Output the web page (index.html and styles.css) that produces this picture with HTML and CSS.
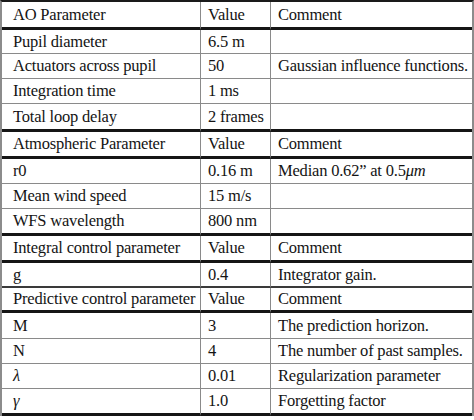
FILE: index.html
```html
<!DOCTYPE html>
<html>
<head>
<meta charset="utf-8">
<link rel="stylesheet" href="styles.css">
</head>
<body>
<table class="params">
  <colgroup>
    <col class="c-name">
    <col class="c-value">
    <col class="c-comment">
  </colgroup>
  <tbody>
    <tr class="head r25"><td>AO Parameter</td><td>Value</td><td>Comment</td></tr>
    <tr class="r23"><td>Pupil diameter</td><td>6.5 m</td><td></td></tr>
    <tr><td>Actuators across pupil</td><td>50</td><td>Gaussian influence functions.</td></tr>
    <tr><td>Integration time</td><td>1 ms</td><td></td></tr>
    <tr class="end r25"><td>Total loop delay</td><td>2 frames</td><td></td></tr>
    <tr class="head"><td>Atmospheric Parameter</td><td>Value</td><td>Comment</td></tr>
    <tr><td>r0</td><td>0.16 m</td><td>Median 0.62” at 0.5<span class="math">μm</span></td></tr>
    <tr><td>Mean wind speed</td><td>15 m/s</td><td></td></tr>
    <tr class="end"><td>WFS wavelength</td><td>800 nm</td><td></td></tr>
    <tr class="head"><td>Integral control parameter</td><td>Value</td><td>Comment</td></tr>
    <tr class="end mid r23"><td>g</td><td>0.4</td><td>Integrator gain.</td></tr>
    <tr class="head r22"><td>Predictive control parameter</td><td>Value</td><td>Comment</td></tr>
    <tr class="r25"><td>M</td><td>3</td><td>The prediction horizon.</td></tr>
    <tr><td>N</td><td>4</td><td>The number of past samples.</td></tr>
    <tr><td><span class="math">λ</span></td><td>0.01</td><td>Regularization parameter</td></tr>
    <tr class="last"><td><span class="math">γ</span></td><td>1.0</td><td>Forgetting factor</td></tr>
  </tbody>
</table>
</body>
</html>
```

FILE: styles.css
```css
html, body {
  margin: 0;
  padding: 0;
  background: #ffffff;
}

.params {
  width: 474px;
  table-layout: fixed;
  border-collapse: separate;
  border-spacing: 0;
  border-top: 2px solid #1a1a1a;
  border-left: 2px solid #8c8c8c;
  border-right: 2px solid #8c8c8c;
  font-family: "Liberation Serif", "Times New Roman", serif;
  font-size: 16.5px;
  letter-spacing: -0.2px;
  color: #141414;
}

.c-name { width: 199px; }
.c-value { width: 70px; }
.c-comment { width: 201px; }

.params td {
  box-sizing: content-box;
  height: 24px;
  padding: 0 0 0 8px;
  line-height: 24px;
  vertical-align: middle;
  white-space: nowrap;
  overflow: hidden;
  border-bottom: 1px solid #8a8a8a;
}

.params td:first-child {
  padding-left: 11px;
  border-right: 1px solid #8a8a8a;
}

.params td:nth-child(2) {
  padding-left: 7px;
  border-right: 1px solid #8a8a8a;
}

.params td:nth-child(3) {
  padding-left: 7px;
}

.params tr.head td,
.params tr.end td {
  border-bottom: 3px solid #151515;
}

.params tr.mid td {
  border-bottom: 2px solid #3a3a3a;
}

.params tr.last td {
  border-bottom: 3px solid #151515;
}

.params tr.r22 td { height: 22px; line-height: 22px; }
.params tr.r23 td { height: 23px; line-height: 23px; }
.params tr.r25 td { height: 25px; line-height: 25px; }
.params tr.r26 td { height: 26px; line-height: 26px; }

.math {
  font-style: italic;
}
```
